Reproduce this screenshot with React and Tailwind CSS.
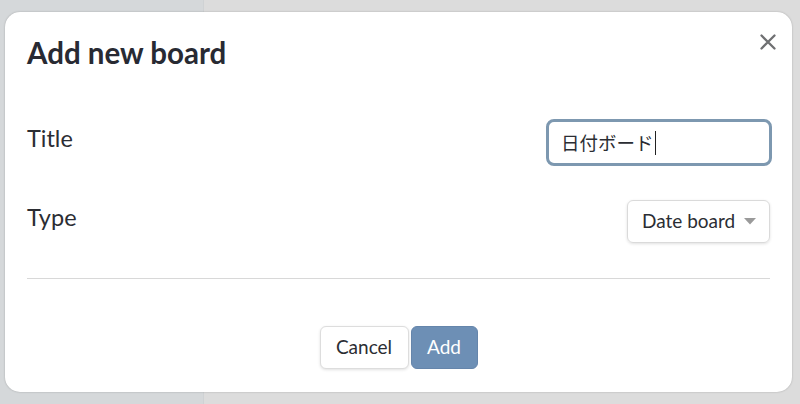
import React from "react";

export default function App() {
  const font = { fontFamily: "Lato, 'Noto Sans CJK JP', sans-serif" };
  return (
    <div className="relative w-[800px] h-[404px] overflow-hidden flex" style={font}>
      <div className="w-[204px] h-full bg-[#d5d8da] border-r border-[#cfd2d4]" />
      <div className="flex-1 h-full bg-[#dcdcdc]" />
      <div className="absolute left-[5px] top-[12px] w-[787px] h-[380px] bg-white rounded-[15px] shadow-[0_0_2px_rgba(0,0,0,0.25)] flex flex-col px-[22px]">
        <div className="flex items-start justify-between pt-[23px]">
          <h1 className="text-[29.5px] leading-[36px] font-bold text-[#282a33]">Add new board</h1>
          <button className="mt-[-1px] mr-[-6px] text-[#6f7072]">
            <svg width="16" height="16" viewBox="0 0 16 16" fill="none" stroke="currentColor" strokeWidth="2.3" strokeLinecap="round">
              <path d="M1.5 1.5L14.5 14.5M14.5 1.5L1.5 14.5" />
            </svg>
          </button>
        </div>
        <div className="flex items-center justify-between mt-[48px]">
          <span className="text-[23.5px] text-[#2b2d33] mt-[-7px]">Title</span>
          <div className="w-[226px] h-[47px] border-[3px] border-[#7d98b0] rounded-[8px] flex items-center px-[12px] mr-[-2px]">
            <span className="text-[18.5px] text-[#2b2d33]" style={{ fontFamily: "'Noto Sans CJK JP', sans-serif" }}>日付ボード</span>
            <span className="w-px h-[24px] bg-[#222] ml-[1px]" />
          </div>
        </div>
        <div className="flex items-center justify-between mt-[34px]">
          <span className="text-[23.5px] text-[#2b2d33] mt-[-7px]">Type</span>
          <div className="h-[43px] w-[143px] border border-[#dadada] rounded-[6px] shadow-[0_1px_3px_rgba(0,0,0,0.12)] flex items-center pl-[14px] pr-[13px] justify-between">
            <span className="text-[19px] text-[#2b2d33]">Date board</span>
            <svg width="12" height="7" viewBox="0 0 12 7"><path d="M0 0H12L6 6.5Z" fill="#9a9a9a" /></svg>
          </div>
        </div>
        <div className="h-px bg-[#d8d8d8] mt-[35px]" />
        <div className="flex justify-center gap-[2px] mt-[47px]">
          <button className="h-[43px] w-[89px] rounded-[6px] border border-[#dddddd] bg-white shadow-[0_1px_3px_rgba(0,0,0,0.12)] text-[19px] text-[#2b2d33]">Cancel</button>
          <button className="h-[43px] w-[67px] rounded-[6px] bg-[#6d8fb5] border border-[#6585ab] text-[19px] text-white">Add</button>
        </div>
      </div>
    </div>
  );
}
